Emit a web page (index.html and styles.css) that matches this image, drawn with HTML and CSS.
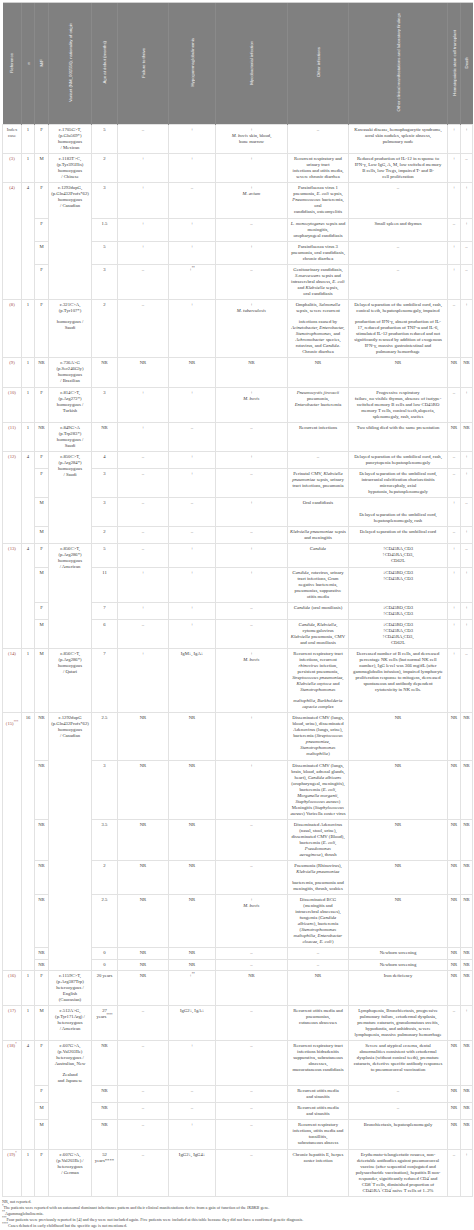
FILE: index.html
```html
<!DOCTYPE html>
<html>
<head>
<meta charset="utf-8">
<link rel="stylesheet" href="styles.css">
</head>
<body>
<table class="t">
<colgroup>
<col class="c1"><col class="c2"><col class="c3"><col class="c4"><col class="c5"><col class="c6"><col class="c7"><col class="c8"><col class="c9"><col class="c10"><col class="c11"><col class="c12">
</colgroup>
<thead>
<tr>
<th><span>Reference</span></th>
<th><span>n</span></th>
<th><span>M/F</span></th>
<th><span>Variant (NM_001556); nationality of origin</span></th>
<th><span>Age at debut (months)</span></th>
<th><span>Failure to thrive</span></th>
<th><span>Hypogammaglobulinemia</span></th>
<th><span>Mycobacterial infection</span></th>
<th><span>Other infections</span></th>
<th><span>Other clinical manifestations and laboratory findings</span></th>
<th><span>Hematopoietic stem cell transplant</span></th>
<th><span>Death</span></th>
</tr>
</thead>
<tbody>
<tr>
<td class="idx">Index case</td><td>1</td><td>F</td><td class="v">c.1705G&gt;T,<br>(p.Glu569*)<br>homozygous<br>/ Mexican</td><td>5</td><td>–</td><td>+</td><td>+<br><i>M. bovis</i> skin, blood,<br>bone marrow</td><td>–</td><td>Kawasaki disease, hemophagocytic syndrome,<br>acral skin nodules, splenic abscess,<br>pulmonary node</td><td>+</td><td>+</td>
</tr>
<tr>
<td class="ref">(3)</td><td>1</td><td>M</td><td class="v">c.1183T&gt;C,<br>(p.Tyr395His)<br>homozygous<br>/ Chinese</td><td>2</td><td>+</td><td>+</td><td>+</td><td>Recurrent respiratory and<br>urinary tract<br>infections and otitis media,<br>severe chronic diarrhea</td><td>Reduced production of IL-12 in response to<br>IFN-γ, Low IgG, A, M, low switched memory<br>B cells, low Tregs, impaired T- and B-<br>cell proliferation</td><td>+</td><td>–</td>
</tr>
<tr>
<td class="ref" rowspan="4">(4)</td><td rowspan="4">4</td><td>F</td><td class="v" rowspan="4">c.1292dupG,<br>(p.Gln432Profs*62)<br>homozygous<br>/ Canadian</td><td>3</td><td>+</td><td>–</td><td>+<br><i>M. avium</i></td><td>Parainfluenza virus 1<br>pneumonia, <i>E. coli</i> sepsis,<br><i>Pneumococcus</i> bacteremia,<br>oral<br>candidiasis, osteomyelitis</td><td>–</td><td>+</td><td>+</td>
</tr>
<tr>
<td>F</td><td>1.5</td><td>+</td><td>+</td><td>–</td><td><i>L. monocytogenes</i> sepsis and<br>meningitis,<br>oropharyngeal candidiasis</td><td>Small spleen and thymus</td><td>–</td><td>+</td>
</tr>
<tr>
<td>M</td><td>5</td><td>+</td><td>+</td><td>+</td><td>Parainfluenza virus 3<br>pneumonia, oral candidiasis,<br>chronic diarrhea</td><td>–</td><td>+</td><td>–</td>
</tr>
<tr>
<td>F</td><td>3</td><td>–</td><td>+<sup>**</sup></td><td>–</td><td>Genitourinary candidiasis,<br><i>S.marcescens</i> sepsis and<br>intracerebral abscess, <i>E. coli</i><br>and <i>Klebsiella</i> sepsis,<br>oral candidiasis</td><td>–</td><td>+</td><td>–</td>
</tr>
<tr>
<td class="ref">(8)</td><td>1</td><td>F</td><td class="v">c.321C&gt;A,<br>(p.Tyr107*)<p>homozygous /<br>Saudi</p></td><td>2</td><td>–</td><td>+</td><td>+<br><i>M. tuberculosis</i></td><td>Omphalitis, <i>Salmonella</i><br>sepsis, severe recurrent<p>infections caused by<br><i>Acinetobacter, Enterobacter,</i><br><i>Stenotrophomonas,</i> and<br><i>Achromobacter</i> species,<br>rotavirus, and <i>Candida</i>.<br>Chronic diarrhea</p></td><td>Delayed separation of the umbilical cord, rash,<br>conical teeth, hepatosplenomegaly, impaired<p>production of IFN-γ, absent production of IL-<br>17, reduced production of TNF-α and IL-6,<br>stimulated IL-12 production reduced and not<br>significantly rescued by addition of exogenous<br>IFN-γ, massive gastrointestinal and<br>pulmonary hemorrhage</p></td><td>–</td><td>+</td>
</tr>
<tr>
<td class="ref">(9)</td><td>1</td><td>NR</td><td class="v">c.736A&gt;G<br>(p.Ser246Gly)<br>homozygous<br>/ Brazilian</td><td>NR</td><td>NR</td><td>NR</td><td>NR</td><td>NR</td><td>NR</td><td>NR</td><td>NR</td>
</tr>
<tr>
<td class="ref">(10)</td><td>1</td><td>F</td><td class="v">c.814C&gt;T,<br>(p.Arg272*)<br>homozygous /<br>Turkish</td><td>3</td><td>+</td><td>+</td><td>+<br><i>M. bovis</i></td><td><i>Pneumocystis jirovecii</i><br>pneumonia,<br><i>Enterobacter</i> bacteremia</td><td>Progressive respiratory<br>failure, no visible thymus, absence of isotype-<br>switched memory B cells and low CD45RO<br>memory T cells, conical teeth,alopecia,<br>splenomegaly, rash, ascites</td><td>–</td><td>+</td>
</tr>
<tr>
<td class="ref">(11)</td><td>1</td><td>NR</td><td class="v">c.849G&gt;A<br>(p.Trp283*)<br>homozygous /<br>Saudi</td><td>NR</td><td>+</td><td>–</td><td>–</td><td>Recurrent infections</td><td>Two sibling died with the same presentation</td><td>NR</td><td>NR</td>
</tr>
<tr>
<td class="ref" rowspan="4">(12)</td><td rowspan="4">4</td><td>F</td><td class="v" rowspan="4">c.850C&gt;T,<br>(p.Arg284*)<br>homozygous<br>/ Saudi</td><td>4</td><td>–</td><td>+</td><td>+</td><td>–</td><td>Delayed separation of the umbilical cord, rash,<br>pancytopenia hepatosplenomegaly</td><td>–</td><td>+</td>
</tr>
<tr>
<td>F</td><td>3</td><td>–</td><td>+</td><td>–</td><td>Perinatal CMV, <i>Klebsiella</i><br><i>pneumoniae</i> sepsis, urinary<br>tract infections, pneumonia</td><td>Delayed separation of the umbilical cord,<br>intracranial calcification chorioretinitis<br>microcephaly, axial<br>hypotonia, hepatosplenomegaly</td><td>–</td><td>+</td>
</tr>
<tr class="r12c">
<td>M</td><td>3</td><td>–</td><td>–</td><td>+</td><td>Oral candidiasis</td><td class="mid">Delayed separation of the umbilical cord,<br>hepatosplenomegaly, rash</td><td>+</td><td>–</td>
</tr>
<tr>
<td>M</td><td>2</td><td>–</td><td>–</td><td>–</td><td><i>Klebsiella pneumoniae</i> sepsis<br>and meningitis</td><td>Delayed separation of the umbilical cord</td><td>–</td><td>+</td>
</tr>
<tr>
<td class="ref" rowspan="4">(13)</td><td rowspan="4">4</td><td>F</td><td class="v" rowspan="4">c.856C&gt;T,<br>(p.Arg286*)<br>homozygous<br>/ American</td><td>5</td><td>–</td><td>+</td><td>+</td><td><i>Candida</i></td><td>↑CD45RA,CD3<br>↑CD45RA,CD3,<br>CD62L</td><td>+</td><td>–</td>
</tr>
<tr>
<td>M</td><td>11</td><td>+</td><td>+</td><td>+</td><td><i>Candida</i>, rotavirus, urinary<br>tract infections, Gram<br>negative bacteremia,<br>pneumonias, suppurative<br>otitis media</td><td>↓CD45RO,CD3<br>↑CD45RA,CD3</td><td>+</td><td>+</td>
</tr>
<tr>
<td>F</td><td>7</td><td>+</td><td>+</td><td>–</td><td><i>Candida</i> (oral moniliasis)</td><td>↓CD45RO,CD3<br>↑CD45RA,CD3</td><td>+</td><td>+</td>
</tr>
<tr>
<td>M</td><td>6</td><td>–</td><td>+</td><td>–</td><td><i>Candida, Klebsiella</i>,<br>cytomegalovirus<br><i>Klebsiella</i> pneumonia, CMV<br>and oral moniliasis</td><td>↓CD45RO,CD3<br>↑CD45RA,CD3<br>↑CD45RA,CD3,<br>CD62L</td><td>+</td><td>+</td>
</tr>
<tr>
<td class="ref">(14)</td><td>1</td><td>M</td><td class="v">c.856C&gt;T,<br>(p.Arg286*)<br>homozygous<br>/ Qatari</td><td>7</td><td>+</td><td>IgM↓, IgA↓</td><td>+<br><i>M. bovis</i></td><td>Recurrent respiratory tract<br>infections, recurrent<br><i>rhinovirus</i> infection,<br>persistent pneumonia,<br><i>Streptococcus pneumoniae,</i><br><i>Klebsiella oxytoca</i> and<br><i>Stenotrophomonas</i><p><i>maltophilia, Burkholderia</i><br><i>cepacia complex</i></p></td><td>Decreased number of B cells, and decreased<br>percentage NK cells (but normal NK cell<br>number), IgG level was 366 mg/dL (after<br>gammaglobulin infusion), impaired lymphocyte<br>proliferation response to mitogens, decreased<br>spontaneous and antibody dependent<br>cytotoxicity in NK cells.</td><td>+</td><td>–</td>
</tr>
<tr>
<td class="ref r15" rowspan="7">(15)<sup>***</sup></td><td rowspan="7">16</td><td>NR</td><td class="v" rowspan="7">c.1292dupG<br>(p.Gln432Profs*62)<br>homozygous<br>/ Canadian</td><td>2.5</td><td>NR</td><td>NR</td><td>+</td><td>Disseminated CMV (lungs,<br>blood, urine), disseminated<br>Adenovirus (lungs, urine),<br>bacteremia (<i>Streptococcus</i><br><i>pneumoniae,</i><br><i>Stenotrophomonas</i><br><i>maltophilia</i>)</td><td>NR</td><td>NR</td><td>NR</td>
</tr>
<tr>
<td>NR</td><td>3</td><td>NR</td><td>NR</td><td>+</td><td>Disseminated CMV (lungs,<br>brain, blood, adrenal glands,<br>heart), <i>Candida albicans</i><br>(oropharyngeal, meningitis),<br>bacteremia (<i>E. coli,</i><br><i>Morganella morganii,</i><br><i>Staphylococcus aureus</i>)<br>Meningitis (<i>Staphylococcus</i><br><i>aureus</i>) Varicella zoster virus</td><td>NR</td><td>NR</td><td>NR</td>
</tr>
<tr>
<td>NR</td><td>3.5</td><td>NR</td><td>NR</td><td>–</td><td>Disseminated Adenovirus<br>(nasal, stool, urine),<br>disseminated CMV (Blood),<br>bacteremia (<i>E. coli,</i><br><i>Pseudomonas</i><br><i>aeruginosa</i>), thrush</td><td>NR</td><td>NR</td><td>NR</td>
</tr>
<tr>
<td>NR</td><td>2</td><td>NR</td><td>NR</td><td>–</td><td>Pneumonia (Rhinovirus),<br><i>Klebsiella pneumoniae</i><p>bacteremia, pneumonia and<br>meningitis, thrush, scabies</p></td><td>NR</td><td>NR</td><td>NR</td>
</tr>
<tr>
<td>NR</td><td>2.5</td><td>NR</td><td>NR</td><td>+<br><i>M. bovis</i></td><td>Disseminated BCG<br>(meningitis and<br>intracerebral abscesses),<br>fungemia (<i>Candida</i><br><i>albicans</i>), bacteremia<br>(<i>Stenotrophomonas</i><br><i>maltophilia, Enterobacter</i><br><i>cloacae, E. coli</i>)</td><td>NR</td><td>NR</td><td>NR</td>
</tr>
<tr>
<td>NR</td><td>0</td><td>NR</td><td>NR</td><td>–</td><td>–</td><td>Newborn screening</td><td>NR</td><td>NR</td>
</tr>
<tr>
<td>NR</td><td>0</td><td>NR</td><td>NR</td><td>–</td><td>–</td><td>Newborn screening</td><td>NR</td><td>NR</td>
</tr>
<tr>
<td class="ref">(16)</td><td>1</td><td>F</td><td class="v">c.1159C&gt;T,<br>(p.Arg387Trp)<br>heterozygous /<br>English<br>(Caucasian)</td><td>20 years</td><td>NR</td><td>+<sup>**</sup></td><td>NR</td><td>NR</td><td>Iron deficiency</td><td>NR</td><td>NR</td>
</tr>
<tr>
<td class="ref">(17)</td><td>1</td><td>M</td><td class="v">c.512A&gt;G,<br>(p.Tyr171Arg) /<br>heterozygous<br>/ American</td><td>27<br>years<sup>****</sup></td><td>–</td><td>IgG2↓, IgA↓</td><td>–</td><td>Recurrent otitis media and<br>pneumonias,<br>cutaneous abscesses</td><td>Lymphopenia, Bronchiectasis, progressive<br>pulmonary failure, ectodermal dysplasia,<br>premature cataracts, granulomatous uveitis,<br>hypodontia, and anhidrosis, severe<br>lymphopenia, massive pulmonary hemorrhage</td><td>–</td><td>+</td>
</tr>
<tr class="r18">
<td class="ref" rowspan="4">(18)<sup>*</sup></td><td rowspan="4">4</td><td>F</td><td class="v" rowspan="4">c.607G&gt;A,<br>(p.Val203Ile)<br>heterozygous /<br>Australian, New<p>Zealand<br>and Japanese</p></td><td>NR</td><td>–</td><td>+</td><td>–</td><td>Recurrent respiratory tract<br>infections hidradenitis<br>suppurativa, subcutaneous<br>abscesses,<br>mucocutaneous candidiasis</td><td>Severe and atypical eczema, dental<br>abnormalities consistent with ectodermal<br>dysplasia (without conical teeth), premature<br>cataracts, defective specific antibody responses<br>to pneumococcal vaccination</td><td>NR</td><td>NR</td>
</tr>
<tr>
<td>F</td><td>NR</td><td>–</td><td>–</td><td>–</td><td>Recurrent otitis media<br>and sinusitis</td><td>–</td><td>NR</td><td>NR</td>
</tr>
<tr>
<td>M</td><td>NR</td><td>–</td><td>–</td><td>–</td><td>Recurrent otitis media<br>and sinusitis</td><td>–</td><td>NR</td><td>NR</td>
</tr>
<tr>
<td>M</td><td>NR</td><td>–</td><td>+</td><td>–</td><td>Recurrent respiratory<br>infections, otitis media and<br>tonsillitis,<br>subcutaneous abscess</td><td>Bronchiectasis, hepatosplenomegaly</td><td>NR</td><td>NR</td>
</tr>
<tr>
<td class="ref">(19)<sup>*</sup></td><td>1</td><td>F</td><td class="v">c.607G&gt;A,<br>(p.Val203Ile) /<br>heterozygous<br>/ German</td><td>52<br>years****</td><td>–</td><td>IgG2↓, IgG4↓</td><td>–</td><td>Chronic hepatitis E, herpes<br>zoster infection</td><td>Erythemato-telangiectatic rosacea, non-<br>detectable antibodies against pneumococcal<br>vaccine (after sequential conjugated and<br>polysaccharide vaccination), hepatitis B non-<br>responder, significantly reduced CD4<sup>+</sup>and<br>CD8<sup>+</sup>T cells, diminished proportion of<br>CD45RA<sup>+</sup>CD4<sup>+</sup>naïve T cells of 1–2%</td><td>–</td><td>+</td>
</tr>
</tbody>
</table>
<div class="notes">
<p>NR, not reported.</p>
<p><sup>*</sup>The patients were reported with an autosomal dominant inheritance pattern and their clinical manifestations derive from a gain of function of the <i>IKBKB</i> gene.</p>
<p><sup>**</sup>Agammaglobulinemia.</p>
<p><sup>***</sup>Four patients were previously reported in [4] and they were not included again. Five patients were included at this table because they did not have a confirmed genetic diagnosis.</p>
<p><sup>****</sup>Cases debuted in early childhood but the specific age is not mentioned.</p>
</div>
</body>
</html>
```

FILE: styles.css
```css
html, body {
  margin: 0;
  padding: 0;
  background: #ffffff;
}
body {
  padding: 2px 2px 0 2px;
  font-family: "Liberation Serif", "DejaVu Serif", serif;
  color: #3a3a3a;
}
.t {
  width: 470px;
  table-layout: fixed;
  border-collapse: collapse;
  font-size: 4.7px;
  line-height: 6px;
}
.c1 { width: 19px; }
.c2 { width: 13px; }
.c3 { width: 14px; }
.c4 { width: 43px; }
.c5 { width: 26px; }
.c6 { width: 51px; }
.c7 { width: 47px; }
.c8 { width: 72px; }
.c9 { width: 61px; }
.c10 { width: 99px; }
.c11 { width: 13px; }
.c12 { width: 12px; }
thead th {
  background: #808080;
  height: 121px;
  padding: 0;
  border-left: 1px solid #8a8a8a;
  border-top: 1px solid #d0d0d0;
  vertical-align: middle;
  text-align: center;
}
thead th:first-child { border-left: none; }
thead th span {
  display: inline-block;
  writing-mode: vertical-rl;
  transform: rotate(180deg);
  font-family: "Liberation Sans", "DejaVu Sans", sans-serif;
  font-size: 4.3px;
  line-height: 5px;
  font-weight: normal;
  color: #f2f2f2;
  white-space: nowrap;
}
tbody td {
  border: 1px solid #e2e2e2;
  padding: 2px 0.5px 2.2px 0.5px;
  vertical-align: top;
  text-align: center;
  overflow-wrap: break-word;
}
tbody td:nth-last-child(4),
tbody td:nth-last-child(3) {
  padding-left: 0;
  padding-right: 0;
  white-space: nowrap;
}
tbody td.v {
  padding-left: 0;
  padding-right: 0;
  white-space: nowrap;
}
tbody td p {
  margin: 5px 0 0 0;
}
tbody td.mid { vertical-align: bottom; }
tr.r12c { height: 29px; }
tr.r18 { height: 45px; }
.ref { color: #a5504a; }
.idx { color: #555; }
td.r15 { padding-top: 8px; }
sup {
  font-size: 3px;
  line-height: 0;
  vertical-align: 2px;
}
i { padding-right: 0.3px; }
.notes {
  padding-top: 2px;
  font-size: 4.2px;
  line-height: 6px;
  color: #444;
}
.notes p { margin: 0; }
```
